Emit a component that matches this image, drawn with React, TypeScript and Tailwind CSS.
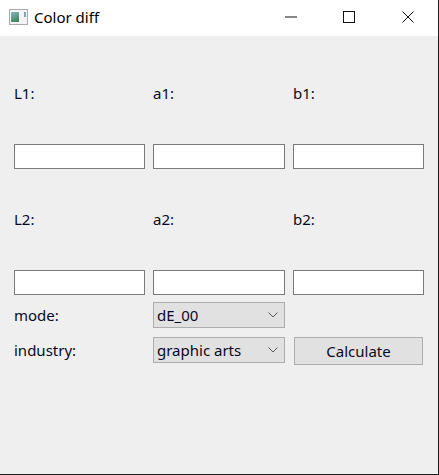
export default function App() {
  const label = "text-[15px] leading-5 text-[#0a0a1e] flex items-center";
  const topLabel = `${label} pb-[2px]`;
  const input = "h-[25px] w-full border border-[#7a7a7a] bg-white";
  const combo = "h-[26px] w-full border border-[#adadad] bg-[#e1e1e1] flex items-center justify-between pl-[3px] pr-[5px] text-[15px] text-[#0a0a1e]";
  const chevron = (
    <svg width="10" height="6" viewBox="0 0 10 6" className="mr-[1px]">
      <path d="M0.5 0.5 L5 5 L9.5 0.5" fill="none" stroke="#5a5a5a" strokeWidth="1" />
    </svg>
  );
  return (
    <div className="w-[439px] h-[475px] bg-[#efefef] border-r border-b border-[#1c1c1c] flex flex-col" style={{ fontFamily: '"Noto Sans", "Open Sans", sans-serif' }}>
      <div className="h-9 bg-white flex items-center shrink-0 pb-[2px]">
        <svg width="19" height="16" viewBox="0 0 19 16" className="ml-[9px] mr-[6px]">
          <rect x="0.5" y="0.5" width="18" height="15" fill="#f4f4f4" stroke="#aaaaaa" />
          <defs>
            <linearGradient id="g" x1="0" y1="0" x2="0.4" y2="1">
              <stop offset="0" stopColor="#8fb5c0" />
              <stop offset="1" stopColor="#3f8a60" />
            </linearGradient>
          </defs>
          <rect x="2" y="3" width="8" height="10" fill="url(#g)" />
          <rect x="15" y="3" width="2" height="5" fill="#7fa7b0" />
        </svg>
        <span className="text-[15px] text-black">Color diff</span>
        <div className="ml-auto flex items-center">
          <svg width="12" height="2" viewBox="0 0 12 2" className="mr-[46px]">
            <rect width="12" height="1" y="0.5" fill="#111" />
          </svg>
          <svg width="12" height="12" viewBox="0 0 12 12" className="mr-[47px]">
            <rect x="0.5" y="0.5" width="11" height="11" fill="none" stroke="#111" />
          </svg>
          <svg width="12" height="12" viewBox="0 0 12 12" className="mr-[24px]">
            <path d="M0.5 0.5 L11.5 11.5 M11.5 0.5 L0.5 11.5" fill="none" stroke="#111" strokeWidth="1" />
          </svg>
        </div>
      </div>
      <div className="pt-4 pl-[14px]">
        <div className="grid grid-cols-[131px_132px_131px] grid-rows-[84px_25px_85px_25px] gap-x-2 gap-y-2">
          <div className={topLabel}>L1:</div>
          <div className={topLabel}>a1:</div>
          <div className={topLabel}>b1:</div>
          <div className={input} />
          <div className={input} />
          <div className={input} />
          <div className={topLabel}>L2:</div>
          <div className={topLabel}>a2:</div>
          <div className={topLabel}>b2:</div>
          <div className={input} />
          <div className={input} />
          <div className={input} />
        </div>
        <div className="mt-[7px] grid grid-cols-[131px_132px_131px] grid-rows-[26px_28px] gap-x-2 gap-y-[9px]">
          <div className={label}>mode:</div>
          <div className={combo}>
            <span>dE_00</span>
            {chevron}
          </div>
          <div />
          <div className={`${label} h-[26px]`}>industry:</div>
          <div className={combo}>
            <span>graphic arts</span>
            {chevron}
          </div>
          <button className="ml-px mr-px h-[28px] border border-[#adadad] bg-[#e1e1e1] text-[15px] text-[#0a0a1e]">Calculate</button>
        </div>
      </div>
    </div>
  );
}
